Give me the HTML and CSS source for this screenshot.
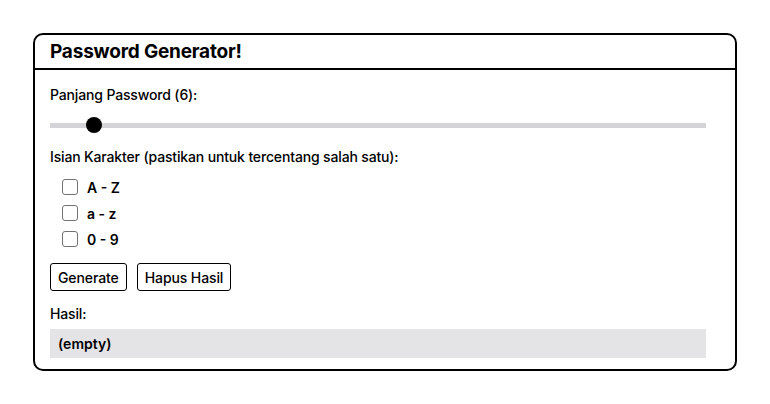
FILE: index.html
```html
<!DOCTYPE html>
<html lang="id">
<head>
<meta charset="utf-8">
<title>Password Generator!</title>
<link rel="stylesheet" href="styles.css">
</head>
<body>
<div class="card">
  <div class="card-header">
    <h1 class="title">Password Generator!</h1>
  </div>
  <div class="card-body">
    <label class="label" for="len">Panjang Password (6):</label>
    <input class="slider" id="len" type="range" min="4" max="40" value="6">
    <div class="label label-chars">Isian Karakter (pastikan untuk tercentang salah satu):</div>
    <div class="options">
      <label class="option"><input type="checkbox" class="check"><span>A - Z</span></label>
      <label class="option"><input type="checkbox" class="check"><span>a - z</span></label>
      <label class="option"><input type="checkbox" class="check"><span>0 - 9</span></label>
    </div>
    <div class="actions">
      <button class="btn" type="button">Generate</button>
      <button class="btn" type="button">Hapus Hasil</button>
    </div>
    <div class="label label-result">Hasil:</div>
    <div class="result">(empty)</div>
  </div>
</div>
</body>
</html>
```

FILE: styles.css
```css
* { box-sizing: border-box; }
html, body { margin: 0; padding: 0; background: #fff; }
body {
  padding: 33px;
  font-family: Inter, "Noto Sans", sans-serif;
  color: #000;
}
.card {
  width: 704px;
  height: 338px;
  border: 2px solid #000;
  border-radius: 10px;
}
.card-header {
  height: 35px;
  border-bottom: 2px solid #000;
  padding: 0 15px;
  display: flex;
  align-items: center;
}
.title {
  margin: 0;
  font-size: 19px;
  font-weight: 700;
  letter-spacing: -0.2px;
}
.card-body {
  padding: 15px 29px 11px 15px;
  display: flex;
  flex-direction: column;
}
.label {
  display: block;
  font-size: 14px;
  line-height: 20px;
  font-weight: 500;
  letter-spacing: -0.15px;
}
.slider {
  -webkit-appearance: none;
  appearance: none;
  width: 656px;
  height: 16px;
  margin: 12px 0 0 0;
  background: transparent;
  padding: 0;
}
.slider::-webkit-slider-runnable-track {
  height: 5px;
  background: #d4d4d8;
}
.slider::-webkit-slider-thumb {
  -webkit-appearance: none;
  width: 16px;
  height: 16px;
  border-radius: 50%;
  background: #000;
  margin-top: -5.5px;
  border: none;
}
.label-chars { margin-top: 14px; }
.options {
  margin-top: 7px;
  padding-left: 12px;
  display: flex;
  flex-direction: column;
}
.option {
  height: 26px;
  display: flex;
  align-items: center;
  gap: 9px;
  font-size: 14px;
  font-weight: 600;
}
.check {
  -webkit-appearance: none;
  appearance: none;
  width: 16px;
  height: 16px;
  margin: 0;
  border: 1px solid #71717a;
  border-radius: 3px;
  background: #fff;
}
.actions {
  margin-top: 11px;
  display: flex;
  gap: 10px;
}
.btn {
  height: 28px;
  padding: 0 7px;
  border: 1.5px solid #000;
  border-radius: 3px;
  background: #fff;
  font-family: inherit;
  font-size: 14px;
  font-weight: 500;
  letter-spacing: -0.1px;
  color: #000;
}
.label-result { margin-top: 13px; }
.result {
  margin-top: 5px;
  height: 29px;
  width: 656px;
  background: #e4e4e7;
  padding: 0 8px;
  display: flex;
  align-items: center;
  font-size: 14px;
  font-weight: 600;
}
```
